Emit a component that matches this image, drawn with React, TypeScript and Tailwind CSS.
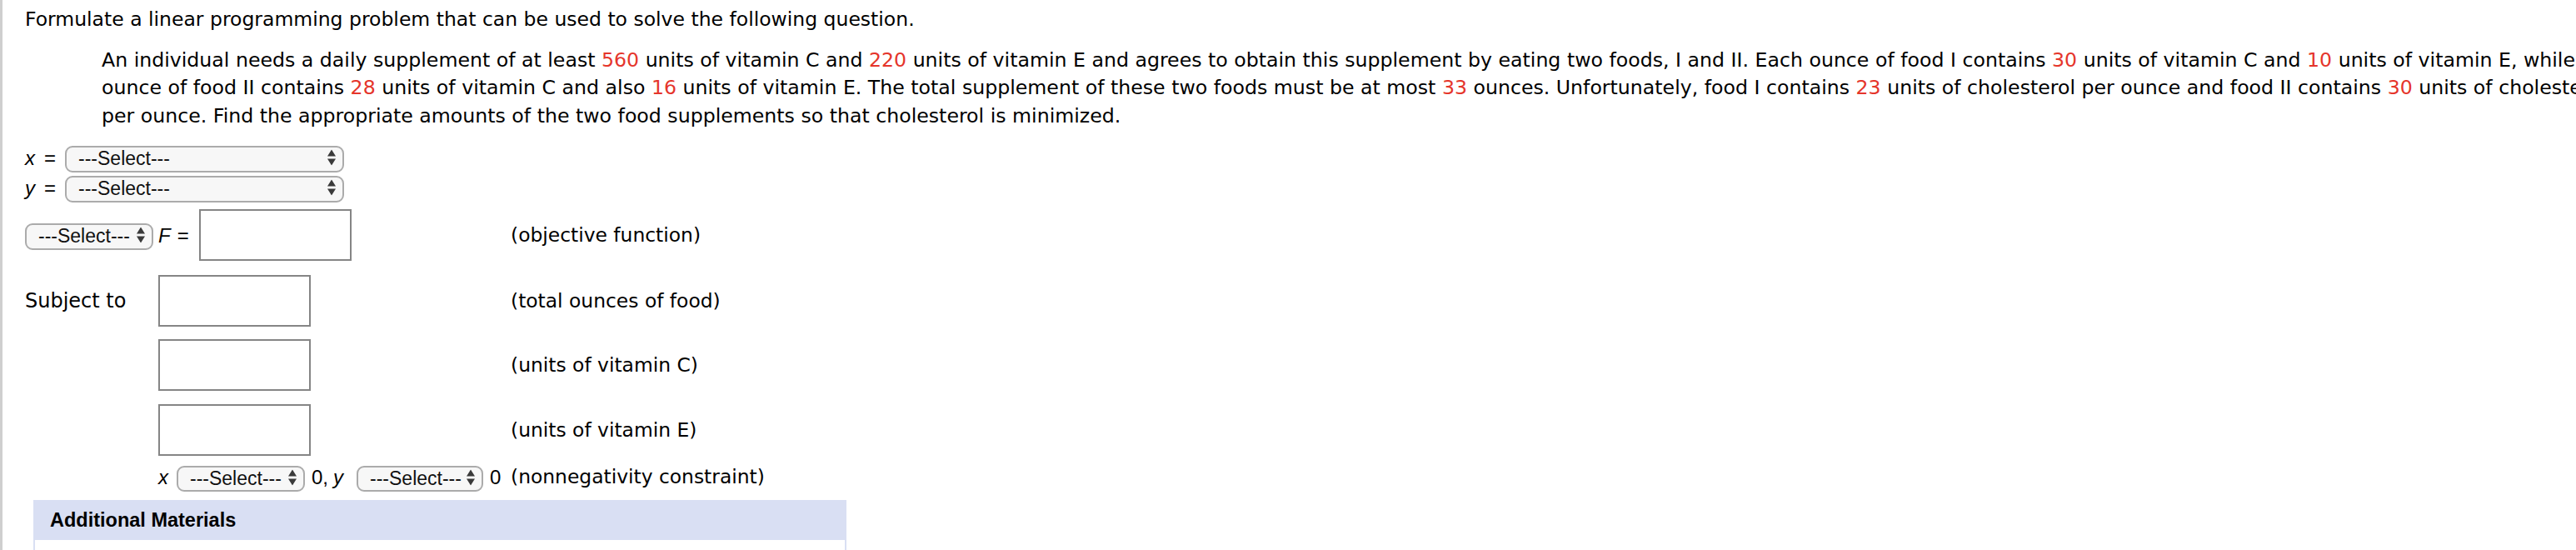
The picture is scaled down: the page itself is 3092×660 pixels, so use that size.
import React from 'react';

const ARIAL = "font-['Liberation_Sans',Arial,Helvetica,sans-serif]";

// red given values in the word problem
const Num: React.FC<{ children: React.ReactNode }> = ({ children }) => (
  <span className="text-[#e5352b]">{children}</span>
);

interface SelectProps {
  className: string;
}

const Select: React.FC<SelectProps> = ({ className }) => (
  <div className={`relative shrink-0 ${className}`}>
    <select
      className={`h-full w-full min-w-0 appearance-none rounded-[9px] border-2 border-[#ababab] bg-[#f7f7f7] pl-[14px] text-[23px] leading-none text-[#111] outline-none ${ARIAL}`}
      defaultValue=""
    >
      <option value="">---Select---</option>
      <option value="a">≤</option>
      <option value="b">=</option>
      <option value="c">≥</option>
    </select>
    <svg
      className="pointer-events-none absolute right-[10px] top-1/2 -translate-y-1/2"
      width="10"
      height="19"
      viewBox="0 0 10 19"
    >
      <path d="M5 0 L10 8 L0 8 Z" fill="#3a3a3a" />
      <path d="M0 11 L10 11 L5 19 Z" fill="#3a3a3a" />
    </svg>
  </div>
);

const Box: React.FC = () => (
  <input type="text" className="h-[62px] w-[183px] shrink-0 border-2 border-[#858585] bg-white outline-none" />
);

const App: React.FC = () => {
  return (
    <div className="h-[660px] w-[3092px] overflow-hidden border-l-[3px] border-[#cfcfcf] bg-white pl-[27px] pt-[7px] font-['DejaVu_Sans',Verdana,sans-serif] text-[23.4px] leading-[33.6px] text-black">
      <p className="text-[23.5px]">Formulate a linear programming problem that can be used to solve the following question.</p>

      <p className="ml-[92px] mt-[15px] whitespace-nowrap text-[23.65px]">
        An individual needs a daily supplement of at least <Num>560</Num> units of vitamin C and <Num>220</Num> units of
        vitamin E and agrees to obtain this supplement by eating two foods, I and II. Each ounce of food I contains{' '}
        <Num>30</Num> units of vitamin C and <Num>10</Num> units of vitamin E, while each
        <br />
        ounce of food II contains <Num>28</Num> units of vitamin C and also <Num>16</Num> units of vitamin E. The total
        supplement of these two foods must be at most <Num>33</Num> ounces. Unfortunately, food I contains{' '}
        <Num>23</Num> units of cholesterol per ounce and food II contains <Num>30</Num> units of cholesterol
        <br />
        per ounce. Find the appropriate amounts of the two food supplements so that cholesterol is minimized.
      </p>

      {/* decision variables */}
      <div className={`mt-[17px] flex h-[32px] items-center text-[24px] ${ARIAL}`}>
        <span className="italic">x</span>
        <span className="ml-[11px]">=</span>
        <Select className="ml-[11px] h-[32px] w-[335px]" />
      </div>
      <div className={`mt-[4px] flex h-[32px] items-center text-[24px] ${ARIAL}`}>
        <span className="italic">y</span>
        <span className="ml-[11px]">=</span>
        <Select className="ml-[11px] h-[32px] w-[335px]" />
      </div>

      {/* objective */}
      <div className="mt-[10px] flex items-center">
        <div className={`flex w-[583px] shrink-0 items-center text-[24px] ${ARIAL}`}>
          <Select className="h-[32px] w-[154px]" />
          <span className="ml-[6px] italic">F</span>
          <span className="ml-[8px]">=</span>
          <span className="ml-[12px]">
            <Box />
          </span>
        </div>
        <span>(objective function)</span>
      </div>

      {/* constraints */}
      <div className="mt-[17px] flex items-center">
        <span className="w-[160px] shrink-0 text-[24px]">Subject to</span>
        <div className="w-[423px] shrink-0">
          <Box />
        </div>
        <span>(total ounces of food)</span>
      </div>
      <div className="mt-[15px] flex items-center">
        <span className="w-[160px] shrink-0" />
        <div className="w-[423px] shrink-0">
          <Box />
        </div>
        <span>(units of vitamin C)</span>
      </div>
      <div className="mt-[16px] flex items-center">
        <span className="w-[160px] shrink-0" />
        <div className="w-[423px] shrink-0">
          <Box />
        </div>
        <span>(units of vitamin E)</span>
      </div>

      <div className="mt-[10px] flex h-[31px] items-center">
        <span className="w-[160px] shrink-0" />
        <div className={`flex w-[423px] min-w-0 shrink-0 items-center overflow-visible text-[24px] ${ARIAL}`}>
          <span className="italic">x</span>
          <Select className="ml-[10px] h-[31px] w-[154px]" />
          <span className="ml-[8px]">0,</span>
          <span className="ml-[6px] italic">y</span>
          <Select className="ml-[16px] h-[31px] w-[152px]" />
          <span className="ml-[8px]">0</span>
        </div>
        <span>(nonnegativity constraint)</span>
      </div>

      {/* additional materials panel */}
      <div className="ml-[10px] mt-[12px] w-[976px] border-x-2 border-[#d9dff3]">
        <div className={`-mx-[2px] flex h-[48px] items-center bg-[#d9dff3] pl-[20px] text-[23.5px] font-bold ${ARIAL}`}>
          Additional Materials
        </div>
        <div className="h-[40px] bg-white" />
      </div>
    </div>
  );
};

export default App;
